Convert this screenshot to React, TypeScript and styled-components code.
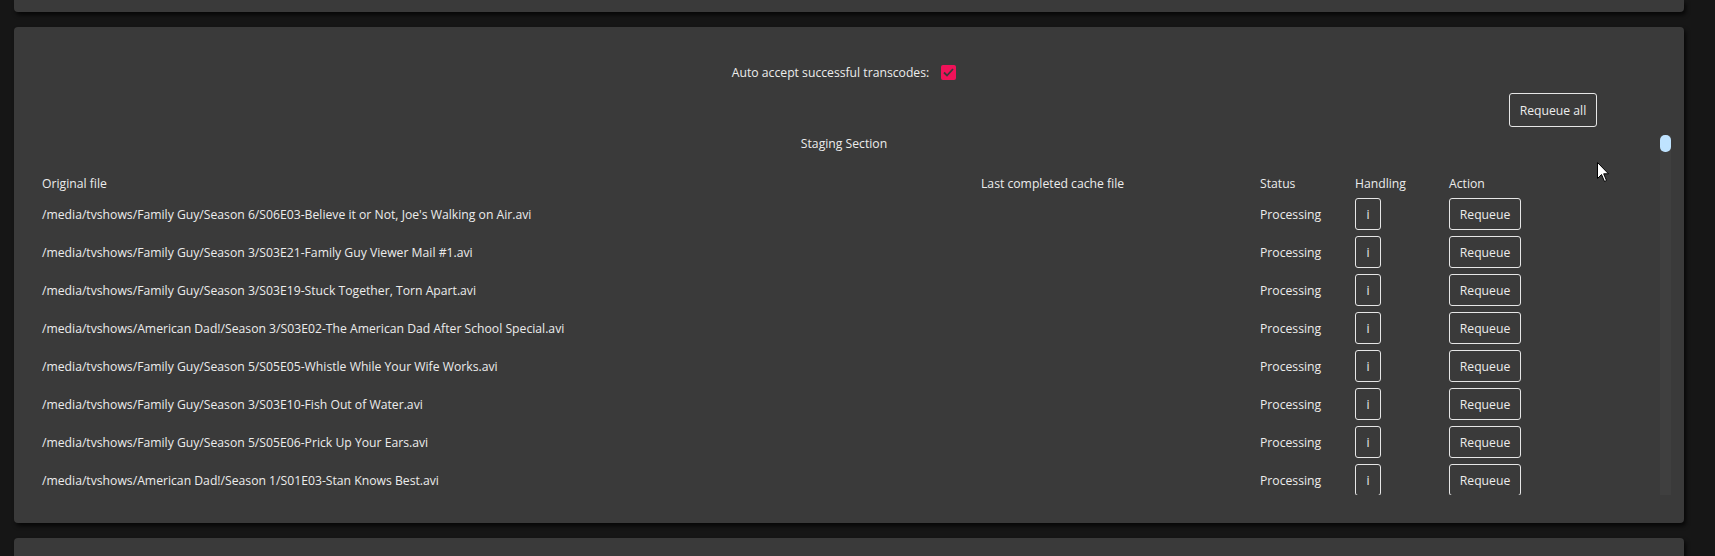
import React from "react";
import styled, { createGlobalStyle } from "styled-components";

const GlobalStyle = createGlobalStyle`
  html, body {
    margin: 0;
    padding: 0;
    background: #161616;
    font-family: "Open Sans", "Noto Sans", sans-serif;
    color: #ececec;
    overflow: hidden;
  }
`;

const Page = styled.div`
  position: relative;
  display: flex;
  flex-direction: column;
  gap: 15px;
  padding: 0 31px 0 14px;
  height: 556px;
`;

const Panel = styled.div<{ $stub?: boolean }>`
  background: #3a3a3a;
  border-radius: ${({ $stub }) => ($stub ? "0 0 4px 4px" : "4px")};
  box-shadow: 2px 3px 4px rgba(0, 0, 0, 0.7);
  height: ${({ $stub }) => ($stub ? "12px" : "auto")};
  flex-shrink: 0;
`;

const MainPanel = styled(Panel)`
  display: flex;
  flex-direction: column;
  padding: 35px 13px 28px 14px;
`;

const BottomPanel = styled(Panel)`
  height: 40px;
`;

const AutoRow = styled.div`
  display: flex;
  align-items: center;
  justify-content: center;
  gap: 12px;
  height: 20px;
  padding-right: 11px;
  font-size: 12.2px;
`;

const CheckBox = styled.span`
  display: inline-flex;
  align-items: center;
  justify-content: center;
  width: 15px;
  height: 15px;
  border-radius: 2px;
  background: #f01259;
`;

const ButtonRow = styled.div`
  display: flex;
  justify-content: flex-end;
  margin-top: 11px;
  padding-right: 74px;
`;

const OutlineButton = styled.button<{ $w: number; $h?: number }>`
  width: ${({ $w }) => $w}px;
  height: ${({ $h }) => $h ?? 32}px;
  padding: 0;
  border: 1px solid #e6e6e6;
  border-radius: 3px;
  background: transparent;
  color: #ececec;
  font-family: inherit;
  font-size: 12.2px;
  cursor: pointer;
`;

const ScrollFrame = styled.div`
  margin-top: 8px;
  height: 360px;
  display: flex;
`;

const Scroll = styled.div`
  flex: 1;
  overflow: hidden;
`;

const Track = styled.div`
  width: 11px;
  background: #3f3f3f;
`;

const Thumb = styled.div`
  height: 17px;
  border-radius: 5px;
  background: #bfe3ff;
`;

const Title = styled.div`
  text-align: center;
  line-height: 18px;
  font-size: 12.2px;
`;

const Grid = styled.div`
  display: grid;
  grid-template-columns: 939px 279px 95px 94px 1fr;
  padding-left: 14px;
  font-size: 12.2px;
`;

const HeadCell = styled.div`
  height: 24px;
  margin-top: 18px;
  display: flex;
  align-items: center;
`;

const Cell = styled.div`
  height: 38px;
  display: flex;
  align-items: center;
  white-space: nowrap;
`;

const Cursor = styled.svg`
  position: absolute;
  left: 1597px;
  top: 162px;
`;

const files = [
  "/media/tvshows/Family Guy/Season 6/S06E03-Believe it or Not, Joe's Walking on Air.avi",
  "/media/tvshows/Family Guy/Season 3/S03E21-Family Guy Viewer Mail #1.avi",
  "/media/tvshows/Family Guy/Season 3/S03E19-Stuck Together, Torn Apart.avi",
  "/media/tvshows/American Dad!/Season 3/S03E02-The American Dad After School Special.avi",
  "/media/tvshows/Family Guy/Season 5/S05E05-Whistle While Your Wife Works.avi",
  "/media/tvshows/Family Guy/Season 3/S03E10-Fish Out of Water.avi",
  "/media/tvshows/Family Guy/Season 5/S05E06-Prick Up Your Ears.avi",
  "/media/tvshows/American Dad!/Season 1/S01E03-Stan Knows Best.avi",
];

export default function App() {
  return (
    <>
      <GlobalStyle />
      <Page>
        <Panel $stub />
        <MainPanel>
          <AutoRow>
            <span>Auto accept successful transcodes:</span>
            <CheckBox>
              <svg width="11" height="9" viewBox="0 0 11 9">
                <path d="M1 4.5 L4 7.5 L10 1" fill="none" stroke="#3a3a3a" strokeWidth="1.8" />
              </svg>
            </CheckBox>
          </AutoRow>
          <ButtonRow>
            <OutlineButton $w={88} $h={34}>Requeue all</OutlineButton>
          </ButtonRow>
          <ScrollFrame>
            <Scroll>
              <Title>Staging Section</Title>
              <Grid>
                <HeadCell>Original file</HeadCell>
                <HeadCell>Last completed cache file</HeadCell>
                <HeadCell>Status</HeadCell>
                <HeadCell>Handling</HeadCell>
                <HeadCell>Action</HeadCell>
                {files.map((f) => (
                  <React.Fragment key={f}>
                    <Cell>{f}</Cell>
                    <Cell />
                    <Cell>Processing</Cell>
                    <Cell>
                      <OutlineButton $w={26}>i</OutlineButton>
                    </Cell>
                    <Cell>
                      <OutlineButton $w={72}>Requeue</OutlineButton>
                    </Cell>
                  </React.Fragment>
                ))}
              </Grid>
            </Scroll>
            <Track>
              <Thumb />
            </Track>
          </ScrollFrame>
        </MainPanel>
        <BottomPanel />
      </Page>
      <Cursor width="13" height="21" viewBox="0 0 13 21">
        <path d="M0.5 0.5 L0.5 16.5 L4.5 12.5 L7.5 19.5 L9.5 18.5 L6.7 11.8 L11.5 11.8 Z" fill="#fff" stroke="#000" strokeWidth="1" />
      </Cursor>
    </>
  );
}
